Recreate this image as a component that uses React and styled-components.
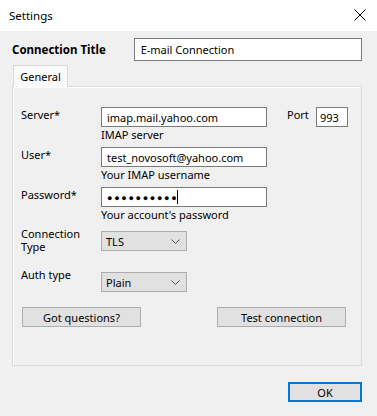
import React from "react";
import styled, { createGlobalStyle } from "styled-components";

const Global = createGlobalStyle`
  html, body { margin: 0; padding: 0; background: #f0f0f0; }
  body { font-family: "Noto Sans", "Open Sans", sans-serif; font-size: 11px; line-height: 15px; color: #000; }
  * { box-sizing: border-box; }
`;

const Window = styled.div`
  width: 377px;
  height: 416px;
  display: flex;
  flex-direction: column;
  background: #f0f0f0;
`;

const TitleBar = styled.div`
  height: 31px;
  flex: none;
  background: #fff;
  display: flex;
  align-items: center;
  justify-content: space-between;
  padding: 0 10px 1px 9px;
  font-size: 11.5px;
`;

const Close = styled.svg`
  width: 12px;
  height: 12px;
  margin-right: 1px;
`;

const Body = styled.div`
  display: flex;
  flex-direction: column;
  padding: 7px 15px 0 12px;
  flex: 1;
`;

const TitleRow = styled.div`
  display: flex;
  align-items: center;
`;

const BoldLabel = styled.div`
  width: 122px;
  font-weight: 700;
  font-size: 11.5px;
`;

const TextBox = styled.div`
  width: ${(p) => p.$w}px;
  height: ${(p) => p.$h || 20}px;
  background: #fff;
  border: 1px solid ${(p) => p.$border || "#7a7a7a"};
  display: flex;
  align-items: center;
  padding-left: ${(p) => p.$pad ?? 5}px;
  white-space: nowrap;
  overflow: hidden;
`;

const Tabs = styled.div`
  margin-top: 4px;
  display: flex;
  padding-left: 1px;
`;

const Tab = styled.div`
  width: 55px;
  height: 22px;
  background: #fafafa;
  border: 1px solid #d9d9d9;
  border-bottom: none;
  display: flex;
  align-items: center;
  justify-content: center;
  padding-bottom: 1px;
  position: relative;
  margin-bottom: -1px;
  z-index: 1;
`;

const Panel = styled.div`
  width: 350px;
  height: 280px;
  border: 1px solid #dcdcdc;
  background: #f0f0f0;
  box-shadow: inset 1px 1px 0 #fff;
  padding: 20px 0 0 8px;
  display: flex;
  flex-direction: column;
`;

const Row = styled.div`
  display: flex;
  align-items: flex-start;
  margin-bottom: ${(p) => p.$mb ?? 0}px;
`;

const Label = styled.div`
  width: 80px;
  margin-top: ${(p) => p.$mt ?? 0}px;
  line-height: ${(p) => p.$lh ?? 15}px;
`;

const Col = styled.div`
  display: flex;
  flex-direction: column;
`;

const Hint = styled.div`
  height: 15px;
  line-height: 15px;
`;

const PortLabel = styled.div`
  margin-left: 20px;
  width: 29px;
`;

const Dots = styled.span`
  font-size: 9px;
  letter-spacing: 1.7px;
  line-height: 1;
  font-weight: 700;
`;

const Caret = styled.span`
  display: inline-block;
  width: 1px;
  height: 14px;
  background: #000;
  margin-left: -1px;
`;

const Select = styled.div`
  width: 86px;
  height: 20px;
  background: #e1e1e1;
  border: 1px solid #adadad;
  display: flex;
  align-items: center;
  justify-content: space-between;
  padding: 0 6px 0 4px;
`;

const Buttons = styled.div`
  display: flex;
  justify-content: space-between;
  padding: 0 15px 0 1px;
  margin-top: 15px;
`;

const Button = styled.div`
  width: ${(p) => p.$w}px;
  height: ${(p) => p.$h || 20}px;
  background: #e1e1e1;
  border: ${(p) => (p.$default ? "2px solid #0078d7" : "1px solid #adadad")};
  display: flex;
  align-items: center;
  justify-content: center;
`;

const Footer = styled.div`
  display: flex;
  justify-content: flex-end;
  margin-top: 16px;
`;

const Chevron = () => (
  <svg width="9" height="5" viewBox="0 0 9 5">
    <path d="M0.5 0.5 L4.5 4.5 L8.5 0.5" fill="none" stroke="#555" strokeWidth="1" />
  </svg>
);

export default function App() {
  return (
    <>
      <Global />
      <Window>
        <TitleBar>
          <span>Settings</span>
          <Close viewBox="0 0 12 12">
            <path d="M0.5 0.5 L11.5 11.5 M11.5 0.5 L0.5 11.5" stroke="#000" strokeWidth="1" />
          </Close>
        </TitleBar>
        <Body>
          <TitleRow>
            <BoldLabel>Connection Title</BoldLabel>
            <TextBox $w={229} $h={23} $pad={6}>E-mail Connection</TextBox>
          </TitleRow>
          <Tabs>
            <Tab>General</Tab>
          </Tabs>
          <Panel>
            <Row $mb={5}>
              <Label>Server*</Label>
              <Col>
                <TextBox $w={166}>imap.mail.yahoo.com</TextBox>
                <Hint>IMAP server</Hint>
              </Col>
              <PortLabel>Port</PortLabel>
              <TextBox $w={32} $pad={3}>993</TextBox>
            </Row>
            <Row $mb={5}>
              <Label>User*</Label>
              <Col>
                <TextBox $w={166}>test_novosoft@yahoo.com</TextBox>
                <Hint>Your IMAP username</Hint>
              </Col>
            </Row>
            <Row $mb={9}>
              <Label>Password*</Label>
              <Col>
                <TextBox $w={166}>
                  <Dots>●●●●●●●●●●</Dots>
                  <Caret />
                </TextBox>
                <Hint>Your account's password</Hint>
              </Col>
            </Row>
            <Row $mb={19}>
              <Label $mt={-4} $lh={13}>Connection Type</Label>
              <Select>
                <span>TLS</span>
                <Chevron />
              </Select>
            </Row>
            <Row>
              <Label $mt={-5}>Auth type</Label>
              <Select>
                <span>Plain</span>
                <Chevron />
              </Select>
            </Row>
            <Buttons>
              <Button $w={119}>Got questions?</Button>
              <Button $w={129}>Test connection</Button>
            </Buttons>
          </Panel>
          <Footer>
            <Button $w={74} $h={20} $default>OK</Button>
          </Footer>
        </Body>
      </Window>
    </>
  );
}
